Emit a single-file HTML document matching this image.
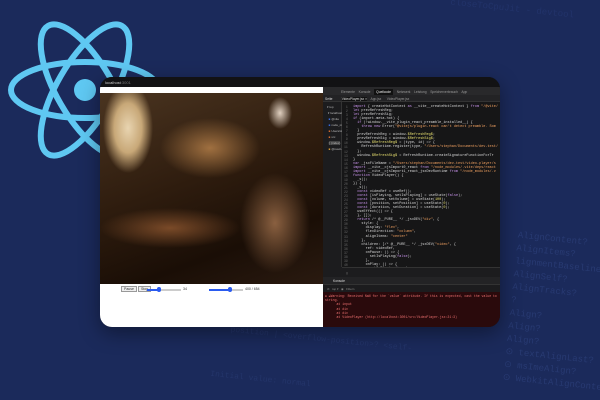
<!DOCTYPE html>
<html><head><meta charset="utf-8"><style>
*{margin:0;padding:0;box-sizing:border-box}
body{width:600px;height:400px;overflow:hidden;background:#1b2a5b;font-family:"Liberation Sans",sans-serif;position:relative}
.bgt{position:absolute;font-family:"Liberation Mono",monospace;color:#24356a;font-size:9px;transform:rotate(6deg);white-space:nowrap}
.card{position:absolute;left:100px;top:77px;width:400px;height:250px;border-radius:12px;overflow:hidden;background:#0e0e10;box-shadow:0 6px 20px rgba(0,0,0,.4)}
.tb{position:absolute;left:0;top:0;width:400px;height:10px;background:#121214;color:#ccc;font-size:4px;padding:3px 0 0 5px}
.page{position:absolute;left:0;top:10px;width:223px;height:240px;background:#fff}
.vid{position:absolute;left:0;top:6px;width:223px;height:191px;background:
radial-gradient(ellipse 25px 45px at 28px 35px,#e8d4b0 0%,#c8a878 55%,transparent 100%),
radial-gradient(ellipse 12px 16px at 180px 20px,#e0d0c0 0%,transparent 100%),
radial-gradient(ellipse 50px 30px at 110px 55px,#a07040 0%,transparent 100%),
radial-gradient(ellipse 35px 50px at 175px 130px,#8a6040 0%,transparent 100%),
radial-gradient(ellipse 70px 20px at 70px 135px,#7a4a28 0%,transparent 100%),
linear-gradient(160deg,#4a3420 0%,#2e1c0e 45%,#1a0e06 75%,#2a1a10 100%)}
.dev{position:absolute;left:223px;top:10px;width:177px;height:240px;background:#1c1c1e}
.code{position:absolute;left:30px;top:18px;font-family:"Liberation Mono",monospace;font-size:3.5px;line-height:4.05px;color:#d8d8d8;white-space:pre}
.ln{position:absolute;left:21px;top:18px;font-family:"Liberation Mono",monospace;font-size:3.2px;line-height:4.05px;color:#666;white-space:pre;text-align:right}
.k{color:#c792ea}.s{color:#f0a060}.y{color:#e8e070}
</style></head><body>
<div class="bgt" style="left:450px;top:4px;color:#22336a">closeToCpuJit - devtool</div>
<div class="bgt" style="left:510px;top:235px;color:#283a72;line-height:13px">AlignContent?<br>AlignItems?<br>lignmentBaseline?<br>AlignSelf?<br>AlignTracks?<br>?<br>Align?<br>Align?<br>Align?<br>⊙ textAlignLast?<br>⊙ msImeAlign?<br>⊙ WebkitAlignContent?</div>
<div class="bgt" style="left:230px;top:335px;font-size:8px">position | &lt;overflow-position&gt;? &lt;self-</div>
<div class="bgt" style="left:210px;top:375px;font-size:8px">Initial value: normal</div>
<svg style="position:absolute;left:4px;top:10px" width="162" height="160" viewBox="-81 -80 162 160">
<g fill="none" stroke="#5fc8f2" stroke-width="6">
<ellipse rx="74" ry="28"/><ellipse rx="74" ry="28" transform="rotate(60)"/><ellipse rx="74" ry="28" transform="rotate(120)"/></g>
<circle r="11" fill="#5fc8f2"/></svg>
<div class="card">
<div class="tb">localhost<span style="color:#777">:3001</span></div>
<div class="page">
<div class="vid"></div>
<div style="position:absolute;left:21px;top:200px;font-size:3.5px;color:#333">
<span style="border:1px solid #999;background:#eee;padding:0 2px">Pause</span><span style="border:1px solid #999;background:#eee;padding:0 2px;margin-left:1px">Stop</span></div>
<div style="position:absolute;left:47px;top:202px;width:34px;height:1.5px;background:#ccc"><div style="width:12px;height:100%;background:#2a5bf0"></div></div>
<div style="position:absolute;left:57px;top:200px;width:4px;height:5px;border-radius:2px;background:#2a5bf0"></div>
<div style="position:absolute;left:83px;top:200px;font-size:3.5px;color:#333">34</div>
<div style="position:absolute;left:109px;top:202px;width:34px;height:1.5px;background:#ccc"><div style="width:20px;height:100%;background:#2a5bf0"></div></div>
<div style="position:absolute;left:128px;top:200px;width:4px;height:5px;border-radius:2px;background:#2a5bf0"></div>
<div style="position:absolute;left:145px;top:200px;font-size:3.5px;color:#333">400 / 654</div>
</div>
<div class="dev">
<div style="position:absolute;left:0;top:0;width:177px;height:8px;background:#29292b;font-size:3.3px;color:#999;padding:2.6px 0 0 18px;white-space:nowrap">Elemente &nbsp;&nbsp; Konsole &nbsp;&nbsp; <span style="background:#111;color:#eee;padding:1px 2px">Quellcode</span> &nbsp;&nbsp; Netzwerk &nbsp;&nbsp; Leistung &nbsp;&nbsp; Speicherverbrauch &nbsp;&nbsp; App</div>
<div style="position:absolute;left:0;top:8px;width:177px;height:7px;background:#232325;border-bottom:1px solid #333;font-size:3.3px;color:#999;padding:2px 0 0 2px;white-space:nowrap"><span style="color:#ddd">Seite</span> &nbsp;&nbsp;&nbsp;&nbsp;&nbsp;&nbsp;&nbsp;&nbsp; <span style="color:#ddd;background:#111">VideoPlayer.jsx ×</span> &nbsp;&nbsp; App.jsx &nbsp;&nbsp;&nbsp;&nbsp; VideoPlayer.jsx</div>
<div style="position:absolute;left:0;top:15px;width:19px;height:165px;border-right:1px solid #333;font-size:3px;color:#bbb;line-height:6px;padding:2px 0 0 4px;white-space:nowrap">▾ top<br>&nbsp;▾ localhost:3<br>&nbsp;&nbsp;<span style="color:#3a6ee8">■</span> @vite<br>&nbsp;&nbsp;<span style="color:#3a6ee8">■</span> node_m<br>&nbsp;&nbsp;<span style="color:#e07030">■</span> Users/st<br>&nbsp;&nbsp;<span style="color:#e07030">■</span> src<br>&nbsp;&nbsp;<span style="background:#444">▯ (index)</span><br>&nbsp;&nbsp;<span style="color:#e0a030">■</span> @react-r</div>
<div style="position:absolute;left:19px;top:15px;width:158px;height:165px;background:#161617"></div>
<div class="ln">1
2
3
4
5
6
7
8
9
10
11
12
13
14
15
16
17
18
19
20
21
22
23
24
25
26
27
28
29
30
31
32
33
34
35
36
37
38
39
40
41
42
43
44</div>
<div class="code"><span class="k">import</span> { createHotContext <span class="k">as</span> __vite__createHotContext } <span class="k">from</span> <span class="s">"/@vite/</span>
<span class="k">let</span> prevRefreshReg;
<span class="k">let</span> prevRefreshSig;
<span class="k">if</span> (import.meta.hot) {
  <span class="k">if</span> (!window.__vite_plugin_react_preamble_installed__) {
    <span class="k">throw new</span> Error(<span class="s">"@vitejs/plugin-react can't detect preamble. Som</span>
  }
  prevRefreshReg = window.<span class="y">$RefreshReg$</span>;
  prevRefreshSig = window.<span class="y">$RefreshSig$</span>;
  window.<span class="y">$RefreshReg$</span> = (type, id) =&gt; {
    RefreshRuntime.register(type, <span class="s">"/Users/stephan/Documents/dev-test/</span>
  };
  window.<span class="y">$RefreshSig$</span> = RefreshRuntime.createSignatureFunctionForTr
}
<span class="k">var</span> _jsxFileName = <span class="s">"/Users/stephan/Documents/dev-test/video-player/s</span>
<span class="k">import</span> __vite__cjsImport0_react <span class="k">from</span> <span class="s">"/node_modules/.vite/deps/react</span>
<span class="k">import</span> __vite__cjsImport1_react_jsxDevRuntime <span class="k">from</span> <span class="s">"/node_modules/.v</span>
<span class="k">function</span> VideoPlayer() {
  _s();
}) {
  _s();
  <span class="k">const</span> videoRef = useRef();
  <span class="k">const</span> [isPlaying, setIsPlaying] = useState(<span class="k">false</span>);
  <span class="k">const</span> [volume, setVolume] = useState(<span class="y">100</span>);
  <span class="k">const</span> [position, setPosition] = useState(<span class="y">0</span>);
  <span class="k">const</span> [duration, setDuration] = useState(<span class="y">0</span>);
  useEffect(() =&gt; {
  }, []);
  <span class="k">return</span> /* @__PURE__ */ _jsxDEV(<span class="s">"div"</span>, {
    style: {
      display: <span class="s">"flex"</span>,
      flexDirection: <span class="s">"column"</span>,
      alignItems: <span class="s">"center"</span>
    },
    children: [/* @__PURE__ */ _jsxDEV(<span class="s">"video"</span>, {
      ref: videoRef,
      onPause: () =&gt; {
        setIsPlaying(<span class="k">false</span>);
      },
      onPlay: () =&gt; {
        setIsPlaying(<span class="k">true</span>);
      },
      onVolumeChange: (event) =&gt; {
        <span class="k">const</span> volume = event.target.volume;</div>
<div style="position:absolute;left:19px;top:180px;width:158px;height:10px;background:#1c1c1e;border-top:1px solid #333;font-size:3px;color:#777;padding:3px 0 0 4px">{}</div>
<div style="position:absolute;left:0;top:190px;width:177px;height:7px;background:#232325;font-size:3.3px;color:#ddd;padding:2px 0 0 10px">Konsole</div>
<div style="position:absolute;left:0;top:197px;width:177px;height:8px;background:#1c1c1e;border-top:1px solid #333;font-size:3px;color:#888;padding:2px 0 0 4px">⊘ &nbsp; top ▾ &nbsp; ◉ &nbsp; Filtern</div>
<div style="position:absolute;left:0;top:205px;width:177px;height:35px;background:#2a0a0c;font-family:'Liberation Mono',monospace;font-size:3.2px;line-height:4.2px;color:#ee7070;padding:2px 0 0 2px;white-space:pre">● ▸Warning: Received NaN for the `value` attribute. If this is expected, cast the value to
string.
      at input
      at div
      at div
      at VideoPlayer (http://localhost:3001/src/VideoPlayer.jsx:21:3)</div>
</div>
</div>
</body></html>
